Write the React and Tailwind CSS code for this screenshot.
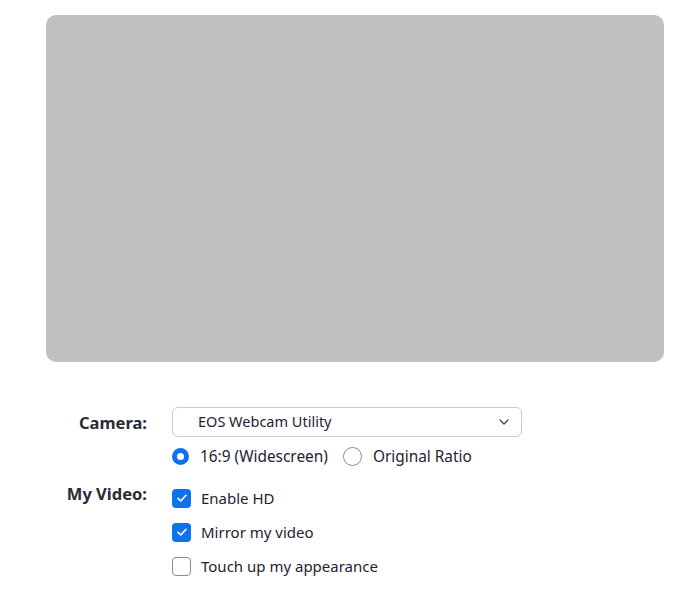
const font = { fontFamily: '"Noto Sans", "Open Sans", Arial, sans-serif' };

function Check({ checked, label }) {
  return (
    <div className="mt-[10px] flex h-[24px] items-center">
      {checked ? (
        <div className="flex h-[19px] w-[19px] items-center justify-center rounded-[4px] bg-[#0e72ed]">
          <svg width="12" height="12" viewBox="0 0 12 12" fill="none">
            <path d="M2 6.3 L4.8 9 L10 3.3" stroke="white" strokeWidth="1.6" strokeLinecap="round" strokeLinejoin="round" />
          </svg>
        </div>
      ) : (
        <div className="h-[19px] w-[19px] rounded-[4px] border-[1.5px] border-[#8c8c8c] bg-white" />
      )}
      <span className="ml-[10px] text-[15px] text-[#232333]">{label}</span>
    </div>
  );
}

function Radio({ selected, label }) {
  return (
    <div className="flex items-center">
      {selected ? (
        <div className="h-[17px] w-[17px] rounded-full border-[5px] border-[#0e72ed] bg-white" />
      ) : (
        <div className="h-[19px] w-[19px] rounded-full border-[1.5px] border-[#8c8c8c] bg-white" />
      )}
      <span className="ml-[11px] text-[15.4px] text-[#232333]">{label}</span>
    </div>
  );
}

export default function App() {
  return (
    <div className="min-h-[595px] bg-white pl-[46px] pt-[15px]" style={font}>
      <div className="h-[347px] w-[618px] rounded-[10px] bg-[#c0c0c0]" />

      <div className="mt-[45px] flex">
        <div className="w-[101px] text-right text-[16.5px] font-bold text-[#2b2b36]">
          <div className="flex h-[32px] items-center justify-end">Camera:</div>
          <div className="mt-[43px] flex h-[24px] items-center justify-end">My Video:</div>
        </div>

        <div className="ml-[25px] flex flex-col">
          <div className="flex h-[30px] w-[350px] items-center justify-between rounded-[6px] border border-[#c9c9d4] bg-white pl-[25px] pr-[12px]">
            <span className="text-[14.5px] text-[#232333]">EOS Webcam Utility</span>
            <svg width="10" height="6" viewBox="0 0 10 6" fill="none">
              <path d="M1 1 L5 5 L9 1" stroke="#444" strokeWidth="1.3" strokeLinecap="round" strokeLinejoin="round" />
            </svg>
          </div>

          <div className="mt-[8px] flex h-[24px] items-center gap-[15px]">
            <Radio selected label="16:9 (Widescreen)" />
            <Radio label="Original Ratio" />
          </div>

          <div className="mt-[7px]">
            <Check checked label="Enable HD" />
            <Check checked label="Mirror my video" />
            <Check label="Touch up my appearance" />
          </div>
        </div>
      </div>
    </div>
  );
}
